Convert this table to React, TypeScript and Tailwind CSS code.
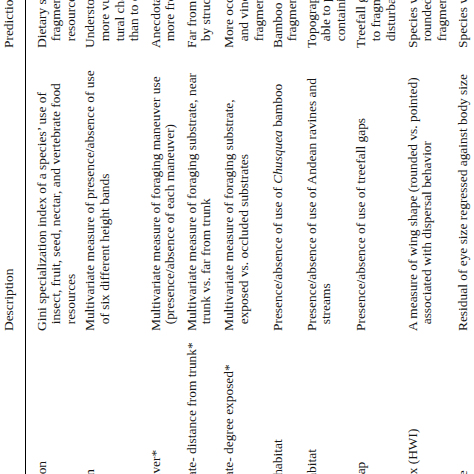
type Row = {
  variable: React.ReactNode;
  description: React.ReactNode[];
  prediction: string[];
  h: string;
};

const rows: Row[] = [
  {
    variable: "Diet specialization",
    description: [
      "Gini specialization index of a species’ use of",
      "insect, fruit, seed, nectar, and vertebrate food",
      "resources",
    ],
    prediction: ["Dietary specialists more sensitive to", "fragmentation due to loss of food", "resources"],
    h: "h-[48.5px]",
  },
  {
    variable: "Foraging stratum",
    description: ["Multivariate measure of presence/absence of use", "of six different height bands"],
    prediction: ["Understory species are", "more vulnerable to struc-", "tural changes in forest", "than to canopy species"],
    h: "h-[65.7px]",
  },
  {
    variable: "Foraging maneuver*",
    description: ["Multivariate measure of foraging maneuver use", "(presence/absence of each maneuver)"],
    prediction: ["Anecdotal evidence suggests", "more frequent use"],
    h: "h-[36px]",
  },
  {
    variable: "Foraging substrate- distance from trunk*",
    description: ["Multivariate measure of foraging substrate, near", "trunk vs. far from trunk"],
    prediction: ["Far from trunk foragers affected", "by structural changes"],
    h: "h-[37.3px]",
  },
  {
    variable: "Foraging substrate- degree exposed*",
    description: ["Multivariate measure of foraging substrate,", "exposed vs. occluded substrates"],
    prediction: ["More occluded foragers use tangles", "and vines more common in", "fragments"],
    h: "h-[48.7px]",
  },
  {
    variable: "Use of bamboo habitat",
    description: [
      <>
        Presence/absence of use of <i>Chusquea</i> bamboo
      </>,
    ],
    prediction: ["Bamboo specialists benefit in", "fragments"],
    h: "h-[34px]",
  },
  {
    variable: "Use of ravine habitat",
    description: ["Presence/absence of use of Andean ravines and", "streams"],
    prediction: ["Topographic specialists less", "able to persist in fragments", "containing few ravines"],
    h: "h-[49.3px]",
  },
  {
    variable: "Use of treefall gap",
    description: ["Presence/absence of use of treefall gaps"],
    prediction: ["Treefall gap specialists adapted", "to fragmented forest with", "disturbance"],
    h: "h-[51.7px]",
  },
  {
    variable: "Hand-wing index (HWI)",
    description: ["A measure of wing shape (rounded vs. pointed)", "associated with dispersal behavior"],
    prediction: ["Species with more", "rounded wings less able to cross", "fragmented landscapes"],
    h: "h-[50px]",
  },
  {
    variable: "Relative eye size",
    description: ["Residual of eye size regressed against body size"],
    prediction: ["Species with larger eyes sensitive to light"],
    h: "h-[40px]",
  },
];

const Lines = ({ lines }: { lines: React.ReactNode[] }) => (
  <div>
    {lines.map((line, i) => (
      <div key={i} className={`whitespace-nowrap ${i > 0 ? "pl-[6.7px]" : ""}`}>
        {line}
      </div>
    ))}
  </div>
);

export default function App() {
  return (
    <div className="w-[474px] h-[474px] overflow-hidden bg-white">
      {/* table is typeset upright, then turned on its side */}
      <div className="w-[820px] origin-top-left -rotate-90 translate-y-[561px] text-[#161616] font-['Liberation_Serif','Times_New_Roman',serif] text-[13.4px] leading-[14.8px]">
        <div className="grid grid-cols-[230px_283px_1fr] h-[25.5px] pt-[2px] border-b-[1.5px] border-black">
          <div>Variable</div>
          <div>Description</div>
          <div>Prediction</div>
        </div>
        <div className="pt-[9px]">
          {rows.map((row, i) => (
            <div key={i} className={`grid grid-cols-[230px_283px_1fr] ${row.h}`}>
              <div className="whitespace-nowrap">{row.variable}</div>
              <Lines lines={row.description} />
              <Lines lines={row.prediction} />
            </div>
          ))}
        </div>
      </div>
    </div>
  );
}
